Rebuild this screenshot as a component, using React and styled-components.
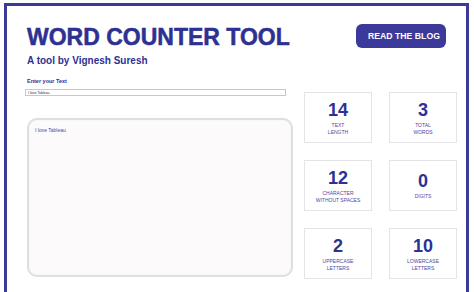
import { useState } from "react";
import styled, { createGlobalStyle } from "styled-components";

const GlobalStyle = createGlobalStyle`
  html, body {
    margin: 0;
    height: 100%;
    overflow: hidden;
    background: #fff;
    font-family: "Liberation Sans", Arial, sans-serif;
  }
`;

const getStats = (text) => {
  const words = text.trim() ? text.trim().split(/\s+/).length : 0;
  return [
    { value: text.length, label: ["Text", "Length"] },
    { value: words, label: ["Total", "Words"] },
    { value: text.replace(/\s/g, "").length, label: ["Character", "without spaces"] },
    { value: (text.match(/\d/g) || []).length, label: ["Digits"] },
    { value: (text.match(/[A-Z]/g) || []).length, label: ["Uppercase", "Letters"] },
    { value: (text.match(/[a-z]/g) || []).length, label: ["Lowercase", "Letters"] },
  ];
};

const App = () => {
  const [text, setText] = useState("I love Tableau");
  const stats = getStats(text);

  return (
    <>
      <GlobalStyle />
      <Frame>
        <Header>
          <Title>WORD COUNTER TOOL</Title>
          <BlogButton>READ THE BLOG</BlogButton>
        </Header>
        <Subtitle>A tool by Vignesh Suresh</Subtitle>
        <Main>
          <Editor>
            <Label>Enter your Text</Label>
            <TextInput value={text} onChange={(e) => setText(e.target.value)} />
            <TextArea value={text} onChange={(e) => setText(e.target.value)} />
          </Editor>
          <StatGrid>
            {stats.map((stat, i) => (
              <StatCard key={i}>
                <StatValue>{stat.value}</StatValue>
                <StatLabel>
                  {stat.label.map((line) => (
                    <span key={line}>{line}</span>
                  ))}
                </StatLabel>
              </StatCard>
            ))}
          </StatGrid>
        </Main>
      </Frame>
    </>
  );
};

export default App;

const Frame = styled.div`
  height: calc(100vh - 3px);
  margin: 3px 5px 0 4px;
  border: 3px solid #3a3a99;
  border-bottom: none;
  padding: 18px 9px 0 20px;
  box-sizing: border-box;
`;

const Header = styled.div`
  display: flex;
  justify-content: space-between;
  align-items: flex-start;
  padding-right: 11px;
`;

const Title = styled.h1`
  margin: 2px 0 0;
  font-size: 23px;
  line-height: 23px;
  font-weight: 700;
  color: #2e3192;
  -webkit-text-stroke: 0.5px #2e3192;
`;

const BlogButton = styled.button`
  width: 90px;
  height: 24px;
  padding: 0 4px 0 12px;
  border: none;
  border-radius: 6px;
  background: #3b3a9a;
  color: #fff;
  font-family: "Liberation Sans", Arial, sans-serif;
  font-size: 8.7px;
  font-weight: 700;
  text-align: left;
  white-space: nowrap;
  cursor: pointer;
`;

const Subtitle = styled.h2`
  margin: 6px 0 0;
  font-size: 10px;
  line-height: 12px;
  font-weight: 700;
  color: #2e3192;
`;

const Main = styled.div`
  display: flex;
  gap: 11px;
  margin-top: 11px;
`;

const Editor = styled.div`
  display: flex;
  flex-direction: column;
  width: 266px;
`;

const Label = styled.label`
  font-size: 5.5px;
  line-height: 7px;
  font-weight: 700;
  color: #2e3192;
`;

const TextInput = styled.input`
  width: 261px;
  height: 7px;
  margin: 4px 0 0 -2px;
  padding: 0 2px;
  box-sizing: border-box;
  border: 1px solid #c8c8c8;
  font-family: "Liberation Sans", Arial, sans-serif;
  font-size: 3.5px;
  color: #333;
  outline: none;
`;

const TextArea = styled.textarea`
  height: 159px;
  margin-top: 22px;
  padding: 7px 6px;
  box-sizing: border-box;
  border: 2px solid #e0dfe0;
  border-radius: 10px;
  background: #fcfafb;
  box-shadow: inset 0 0 2px rgba(0, 0, 0, 0.06);
  font-family: "Liberation Sans", Arial, sans-serif;
  font-size: 5px;
  line-height: 6px;
  color: #4a49a4;
  resize: none;
  outline: none;
  overflow: hidden;
`;

const StatGrid = styled.div`
  display: grid;
  grid-template-columns: 68px 68px;
  grid-auto-rows: 51px;
  gap: 17px;
  margin-top: 14px;
`;

const StatCard = styled.div`
  display: flex;
  flex-direction: column;
  align-items: center;
  justify-content: center;
  gap: 3px;
  padding-top: 1px;
  box-sizing: border-box;
  border: 1px solid #e4e4e8;
  background: #fff;
`;

const StatValue = styled.div`
  font-size: 18px;
  line-height: 18px;
  font-weight: 700;
  color: #2e3192;
`;

const StatLabel = styled.div`
  display: flex;
  flex-direction: column;
  align-items: center;
  font-size: 5px;
  line-height: 6.5px;
  color: #4a49a4;
  text-transform: uppercase;
`;
